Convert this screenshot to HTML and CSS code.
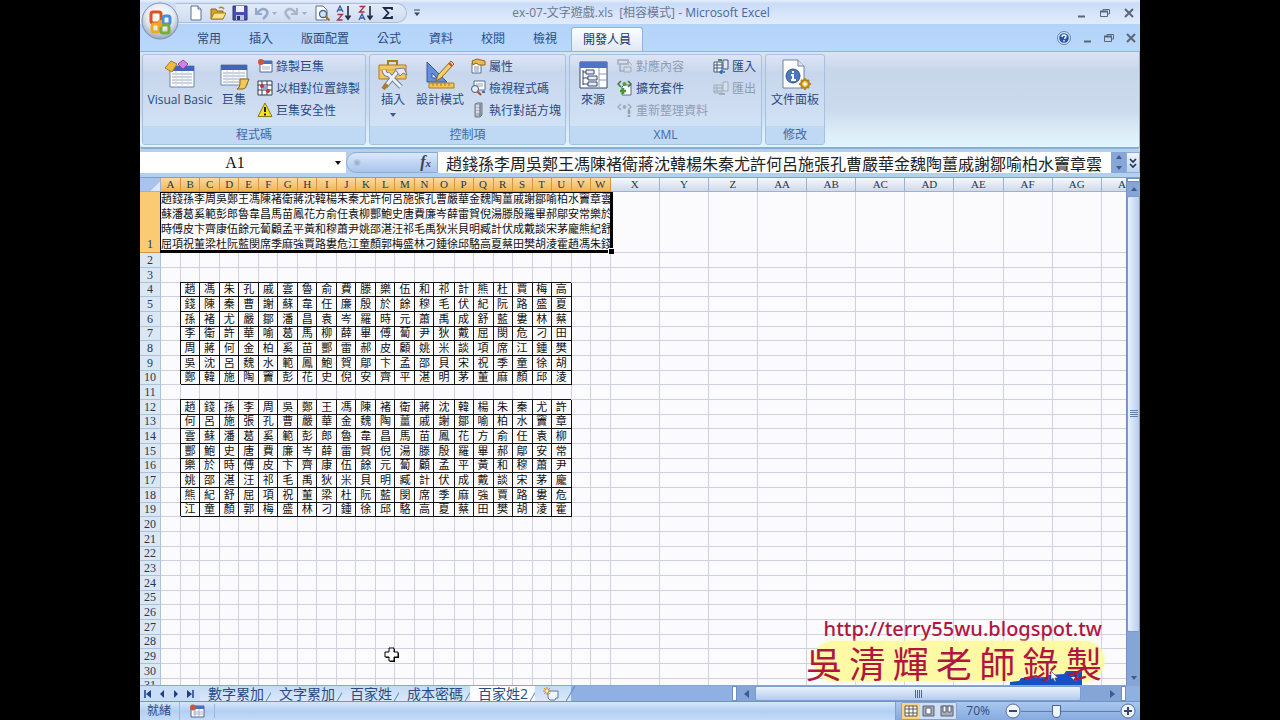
FILE: index.html
```html
<!DOCTYPE html>
<html lang="zh-Hant">
<head>
    <meta charset="UTF-8">
    <meta name="viewport" content="width=device-width, initial-scale=1.0">
    <title>ex-07-文字遊戲.xls - Microsoft Excel</title>
    <link rel="stylesheet" href="styles.css">
</head>
<body>
    <div class="app">
        <!-- Title bar -->
        <header class="title-bar">
            <div class="quick-access">
                <button aria-label="新增"><svg width="16" height="16" viewBox="0 0 16 16"><path d="M3 1h7l3 3v11H3z" fill="#fff" stroke="#5b6f93"/><path d="M10 1v3h3" fill="#dbe5f4" stroke="#5b6f93"/></svg></button>
                <button aria-label="開啟"><svg width="16" height="16" viewBox="0 0 16 16"><path d="M1 14V4h5l1 2h6v8z" fill="#d9a128" stroke="#8d6a16"/><path d="M1 14l3-6h12l-3 6z" fill="#ffe28a" stroke="#a37a1b"/><path d="M9 3q3-2 5 1" fill="none" stroke="#b88618" stroke-width="1.5"/></svg></button>
                <button aria-label="儲存"><svg width="16" height="16" viewBox="0 0 16 16"><path d="M1 1h14v14H1z" fill="#4a4fb5" stroke="#2b2f85"/><path d="M4 1h8v6H4z" fill="#eef2fb"/><path d="M4 10h8v5H4z" fill="#b9c4e4"/><path d="M5 11h3v4H5z" fill="#2b2f85"/></svg></button>
                <button aria-label="復原"><svg width="24" height="16" viewBox="0 0 24 16"><path d="M2 3v6h6" fill="none" stroke="#94a8cf" stroke-width="2"/><path d="M3 8q5-6 9-3t-3 9" fill="none" stroke="#94a8cf" stroke-width="2.5"/><path d="M18 7h5l-2.500 3z" fill="#a0aecb"/></svg></button>
                <button aria-label="取消復原"><svg width="24" height="16" viewBox="0 0 24 16"><path d="M13 3v6H7" fill="none" stroke="#a9b5cc" stroke-width="2"/><path d="M12 8Q7 2 3 5t3 9" fill="none" stroke="#a9b5cc" stroke-width="2.500"/><path d="M18 7h5l-2.500 3z" fill="#a0aecb"/></svg></button>
                <button aria-label="預覽列印"><svg width="16" height="16" viewBox="0 0 16 16"><path d="M2 1h7l4 4v10H2z" fill="#fff" stroke="#5b6f93"/><circle cx="9" cy="9" r="3.500" fill="#cfe4f7" stroke="#4c6182" stroke-width="1.300"/><path d="M11.500 11.500l4 4" stroke="#a3701f" stroke-width="2"/></svg></button>
                <button aria-label="遞增排序"><svg width="16" height="16" viewBox="0 0 16 16"><path d="M1 7l3-6 3 6M2 5h4" fill="none" stroke="#3d58a8" stroke-width="1.300"/><path d="M1.500 9.500h5l-5 5.500h5" fill="none" stroke="#a3324a" stroke-width="1.300"/><path d="M12 1v12M9.500 10.500l2.500 3.500 2.500-3.500" fill="none" stroke="#222c44" stroke-width="1.600"/></svg></button>
                <button aria-label="遞減排序"><svg width="16" height="16" viewBox="0 0 16 16"><path d="M1.500 1.500h5l-5 5.500h5" fill="none" stroke="#a3324a" stroke-width="1.300"/><path d="M1 15l3-6 3 6M2 13h4" fill="none" stroke="#3d58a8" stroke-width="1.300"/><path d="M12 1v12M9.500 10.500l2.500 3.500 2.500-3.500" fill="none" stroke="#222c44" stroke-width="1.600"/></svg></button>
                <button aria-label="加總"><svg width="16" height="16" viewBox="0 0 16 16"><path d="M12 5V3H4l4.500 5L4 13h8v-2" fill="none" stroke="#1d2a45" stroke-width="1.800"/></svg></button>
            </div>
            <button class="qat-more" aria-label="自訂快速存取工具列"><svg width="8" height="8" viewBox="0 0 8 8"><path d="M1 1h6" stroke="#33476b"/><path d="M1 3.500h6L4 7z" fill="#33476b"/></svg></button>
            <h1>ex-07-文字遊戲.xls&nbsp; [相容模式] - <span>Microsoft Excel</span></h1>
            <div class="window-buttons">
                <button aria-label="最小化"><svg width="12" height="12" viewBox="0 0 12 12"><path d="M3 9.500h7" stroke="#5b6677" stroke-width="2"/></svg></button>
                <button aria-label="還原"><svg width="12" height="12" viewBox="0 0 12 12"><path d="M4 4V2.500h6.500V7H9" fill="none" stroke="#5b6677"/><path d="M1.500 4.500h7v5h-7z" fill="none" stroke="#5b6677"/><path d="M1 4.500h8" stroke="#5b6677" stroke-width="2"/></svg></button>
                <button aria-label="關閉"><svg width="12" height="12" viewBox="0 0 12 12"><path d="M2 2l8 8M10 2l-8 8" stroke="#5b6677" stroke-width="2"/></svg></button>
            </div>
        </header>
        <button class="office-button" aria-label="Office 按鈕"><svg width="38" height="38" viewBox="0 0 38 38">
            <defs><radialGradient id="orb" cx="50%" cy="35%" r="65%"><stop offset="0" stop-color="#fff"/><stop offset="0.600" stop-color="#e3e9f1"/><stop offset="1" stop-color="#98a6bd"/></radialGradient></defs>
            <circle cx="19" cy="19" r="18" fill="url(#orb)" stroke="#7f91b0"/>
            <g fill="none" stroke-width="3"><rect x="10" y="10" width="10" height="11" rx="2" stroke="#e0521d"/><rect x="22" y="14" width="7" height="8" rx="2" stroke="#4a8fd6"/><rect x="11" y="22" width="7" height="8" rx="2" stroke="#f0ab1c"/><rect x="20" y="23" width="8" height="8" rx="2" stroke="#77ae3b"/></g>
            <path d="M17 18h4v7h-4z" fill="#f4a02d"/></svg></button>

        <!-- Ribbon tabs -->
        <nav class="tabs">
            <button>常用</button>
            <button>插入</button>
            <button>版面配置</button>
            <button>公式</button>
            <button>資料</button>
            <button>校閱</button>
            <button>檢視</button>
            <button class="active">開發人員</button>
            <div class="window-buttons inner">
                <button aria-label="說明"><svg width="14" height="14" viewBox="0 0 14 14"><circle cx="7" cy="7" r="6.500" fill="#d5e6fa" stroke="#5f83ba"/><circle cx="7" cy="7" r="4.800" fill="#2753a8"/><path d="M5 6q0-2 2-2t2 1.500Q9 7 7 7.500M7 9v1.500" fill="none" stroke="#fff" stroke-width="1.400"/></svg></button>
                <button aria-label="最小化"><svg width="12" height="12" viewBox="0 0 12 12"><path d="M3 9.500h7" stroke="#5b6677" stroke-width="2"/></svg></button>
                <button aria-label="還原"><svg width="12" height="12" viewBox="0 0 12 12"><path d="M4 4V2.500h6.500V7H9" fill="none" stroke="#5b6677"/><path d="M1.500 4.500h7v5h-7z" fill="none" stroke="#5b6677"/><path d="M1 4.500h8" stroke="#5b6677" stroke-width="2"/></svg></button>
                <button aria-label="關閉"><svg width="12" height="12" viewBox="0 0 12 12"><path d="M2 2l8 8M10 2l-8 8" stroke="#5b6677" stroke-width="2"/></svg></button>
            </div>
        </nav>

        <!-- Ribbon -->
        <div class="ribbon">
            <section class="group group-code">
                <div class="group-body">
                    <button class="big"><svg width="32" height="32" viewBox="0 0 32 32"><path d="M6 7h24v21H6z" fill="#fff" stroke="#6f83aa"/><path d="M6 7h24v5H6z" fill="#3f66b8"/><path d="M8 15h20M8 18h20M8 21h20M8 24h20" stroke="#98a7c4"/><path d="M12 12v16M18 12v16M24 12v16" stroke="#cdd6e6"/><path d="M1 9l6-7 6 3-5 8z" fill="#f1bb3e" stroke="#a97a1b"/><path d="M14 5l5-4 5 4-5 5z" fill="#d77fdc" stroke="#9a4ba5"/></svg>Visual Basic</button>
                    <button class="big"><svg width="32" height="32" viewBox="0 0 32 32"><path d="M3 6h26v20H3z" fill="#fff" stroke="#6f83aa"/><path d="M3 6h26v5H3z" fill="#3f66b8"/><path d="M5 14h22M5 17h22M5 20h22M5 23h22" stroke="#98a7c4"/><path d="M9 11v15M15 11v15M21 11v15" stroke="#cdd6e6"/><path d="M22 20h9l-2 5q-1 5-4 5h-6q3-1 3-5z" fill="#f0c75c" stroke="#8c6516"/></svg>巨集</button>
                    <div class="small-list">
                        <button><svg width="16" height="16" viewBox="0 0 16 16"><path d="M3 3h12v11H3z" fill="#fff" stroke="#51658f"/><path d="M3 3h12v3H3z" fill="#4a70bd"/><path d="M5 9h8M5 11h8" stroke="#a7b4cc"/><circle cx="4" cy="4" r="3" fill="#d2523a"/></svg>錄製巨集</button>
                        <button><svg width="16" height="16" viewBox="0 0 16 16"><path d="M1 1h14v14H1z" fill="#fff" stroke="#333a52"/><path d="M1 5h14M1 10h14M5 1v14M10 1v14" stroke="#333a52"/><path d="M5 5h5v5H5z" fill="#8fa6d6"/><circle cx="5" cy="6" r="2" fill="#c63030"/><circle cx="11" cy="11" r="2" fill="#c63030"/></svg>以相對位置錄製</button>
                        <button><svg width="16" height="16" viewBox="0 0 16 16"><path d="M8 1l7 13.500H1z" fill="#f7e21c" stroke="#8b7b12"/><path d="M8 5v5M8 11.500v2" stroke="#1e1e1e" stroke-width="2"/></svg>巨集安全性</button>
                    </div>
                </div>
                <h2>程式碼</h2>
            </section>
            <section class="group group-controls">
                <div class="group-body">
                    <button class="big"><svg width="32" height="32" viewBox="0 0 32 32"><path d="M11 6V2h9v4" fill="none" stroke="#a77b25" stroke-width="2"/><path d="M2 6h27v14H2z" fill="#f3c65f" stroke="#a77b25"/><path d="M2 11h27" stroke="#d39f35"/><path d="M8 28l12-15M7 11q1 6 6 4M11 15l13 13" stroke="#6f7f98" stroke-width="5" fill="none"/><path d="M8 28l12-15M7 11q1 6 6 4M11 15l13 13" stroke="#eef2f8" stroke-width="3" fill="none"/><path d="M18 10l9-1 3 7-4-2-3 3z" fill="#e4eaf3" stroke="#6f7f98"/><path d="M6 30l4-5" stroke="#ad7b26" stroke-width="4"/></svg>插入<i class="caret"></i></button>
                    <button class="big"><svg width="32" height="32" viewBox="0 0 32 32"><path d="M3 3v20h20z" fill="#648fd8" stroke="#37599f"/><path d="M8 14v5h5z" fill="#dce8f9" stroke="#37599f"/><path d="M5 24h25v5H5z" fill="#f4c556" stroke="#a77b25"/><path d="M9 24v3M13 24v3M17 24v3M21 24v3M25 24v3" stroke="#a77b25"/><path d="M12 22l2-6L27 2l3 3-13 14z" fill="#f5cf67" stroke="#866727"/><path d="M25 4l3 3" stroke="#c6483e" stroke-width="2"/></svg>設計模式</button>
                    <div class="small-list">
                        <button><svg width="16" height="16" viewBox="0 0 16 16"><path d="M2 5h9v10H2z" fill="#fff" stroke="#596d93"/><path d="M4 9h5M4 11h5M4 13h5" stroke="#7f91b0"/><path d="M2 3l5-2 8 2v4H9L6 5 3 7z" fill="#e9bb50" stroke="#8a671d"/></svg>屬性</button>
                        <button><svg width="16" height="16" viewBox="0 0 16 16"><path d="M4 1h11v9H4z" fill="#fff" stroke="#596d93"/><path d="M6 4h7M6 6h7" stroke="#90a0bb"/><circle cx="5" cy="9" r="3.500" fill="#e2eefa" stroke="#4b5670"/><path d="M7.500 11.500L11 15" stroke="#b14934" stroke-width="2"/><path d="M12 12h3" stroke="#596d93" stroke-width="2"/></svg>檢視程式碼</button>
                        <button><svg width="16" height="16" viewBox="0 0 16 16"><path d="M5 2l2-1h5v12l-2 2H5z" fill="#aeb6c4" stroke="#6e7789"/><path d="M6 4h4M6 7h4M6 10h4" stroke="#fff"/><path d="M10 2v12" stroke="#596276"/></svg>執行對話方塊</button>
                    </div>
                </div>
                <h2>控制項</h2>
            </section>
            <section class="group group-xml">
                <div class="group-body">
                    <button class="big"><svg width="32" height="32" viewBox="0 0 32 32"><path d="M3 3h27v26H3z" fill="#fff" stroke="#33456e"/><path d="M3 3h27v6H3z" fill="#4c75c7"/><path d="M22 9v20M22 15h8M22 21h8" stroke="#8998b5"/><path d="M6 11v15M6 13h5M6 19h6M6 25h6" stroke="#33456e"/><path d="M9 11h8v4H9zM11 17h9v4h-9zM11 23h9v4h-9z" fill="#e8eef8" stroke="#33456e"/></svg>來源</button>
                    <div class="small-list">
                        <button disabled><svg width="16" height="16" viewBox="0 0 16 16"><path d="M1 2h10v4H1zM3 6v7h4" fill="none" stroke="#a3acba" stroke-width="1.500"/><path d="M7 9h7v5H7zM10 2l5 5" fill="#d4dae4" stroke="#a3acba"/></svg>對應內容</button>
                        <button><svg width="16" height="16" viewBox="0 0 16 16"><path d="M7 5h7v10H5V7z" fill="#fff" stroke="#596d93"/><path d="M4 1L1 4l3 3M11 1l3 3-3 3" fill="none" stroke="#3f7a36" stroke-width="1.500"/><circle cx="7.500" cy="4" r="2" fill="#5a9c45"/><path d="M6 8v6M3 11h6" stroke="#3e9a2e" stroke-width="2.500"/></svg>擴充套件</button>
                        <button disabled><svg width="16" height="16" viewBox="0 0 16 16"><path d="M4 2L1 5l3 3M11 2l3 3-3 3" fill="none" stroke="#a3acba" stroke-width="1.500"/><circle cx="7.500" cy="5" r="2" fill="#a3acba"/><path d="M12 8v4M12 13v2" stroke="#929cab" stroke-width="2.500"/></svg>重新整理資料</button>
                    </div>
                    <div class="small-list">
                        <button><svg width="16" height="16" viewBox="0 0 16 16"><path d="M1 4h8v10H1z" fill="#fff" stroke="#43557d"/><path d="M1 7h8M1 10h8M4 4v10" stroke="#43557d"/><path d="M10 2h5v9h-5z" fill="#dfe8f6" stroke="#43557d"/><path d="M12 14h-5M9 12l-2 2 2 2" fill="none" stroke="#2d6cb5" stroke-width="1.500"/><path d="M5 2h4" stroke="#3f9236" stroke-width="2"/></svg>匯入</button>
                        <button disabled><svg width="16" height="16" viewBox="0 0 16 16"><path d="M1 5h8v8H1zM1 8h8M1 11h8M4 5v8" fill="none" stroke="#a3acba"/><path d="M10 2h5v9h-5z" fill="#d9dfe8" stroke="#a3acba"/><path d="M6 14h6" stroke="#a3acba" stroke-width="2"/></svg>匯出</button>
                    </div>
                </div>
                <h2>XML</h2>
            </section>
            <section class="group group-modify">
                <div class="group-body">
                    <button class="big"><svg width="32" height="32" viewBox="0 0 32 32"><path d="M4 1h15l6 6v22H4z" fill="#fff" stroke="#7182a2"/><path d="M19 1v6h6" fill="#dde6f3" stroke="#7182a2"/><circle cx="14" cy="17" r="7" fill="#4a79c0" stroke="#315694"/><path d="M14 12v2M12 16h2v5M12 21h5" stroke="#fff" stroke-width="2" fill="none"/><circle cx="26" cy="25" r="4" fill="#f2cd58" stroke="#b28722" stroke-width="2"/><path d="M26 19v3M26 28v3M20 25h3M29 25h3M22 21l2 2M28 27l2 2M30 21l-2 2M24 27l-2 2" stroke="#b28722" stroke-width="2"/><circle cx="26" cy="25" r="1.500" fill="#fff"/></svg>文件面板</button>
                </div>
                <h2>修改</h2>
            </section>
        </div>

        <!-- Formula bar -->
        <div class="formula-bar">
            <input class="name-box" type="text" value="A1" aria-label="名稱方塊">
            <button class="name-drop" aria-label="名稱清單"><i class="caret"></i></button>
            <div class="fx-area"><span class="knob"></span><button class="fx" aria-label="插入函數">f<small>x</small></button></div>
            <input class="formula-input" type="text" aria-label="資料編輯列" value="趙錢孫李周吳鄭王馮陳褚衛蔣沈韓楊朱秦尤許何呂施張孔曹嚴華金魏陶薑戚謝鄒喻柏水竇章雲">
            <div class="spinner"><button aria-label="上一行"><i class="caret up"></i></button><button aria-label="下一行"><i class="caret"></i></button></div>
            <button class="expand" aria-label="展開資料編輯列"><svg width="10" height="12" viewBox="0 0 10 12"><path d="M2 2l3 3 3-3M2 7l3 3 3-3" fill="none" stroke="#1f2f52" stroke-width="1.600"/></svg></button>
        </div>

        <!-- Worksheet -->
        <main class="workspace">
            <div class="sheet">
                <table id="grid"></table>
                <svg class="cross-cursor" width="16" height="16" viewBox="0 0 16 16"><path d="M6 2h5v4h4v5h-4v4H6v-4H2V6h4z" fill="#000"/><path d="M5 1h5v4h4v5h-4v4H5v-4H1V5h4z" fill="#fff" stroke="#000"/></svg>
                <div class="watermark">
                    <a href="http://terry55wu.blogspot.tw">http://terry55wu.blogspot.tw</a>
                    <p><svg class="stroke-mark" width="72" height="14" viewBox="0 0 72 14"><path d="M0 11l9-1 2-3 25-1 2-2 16-1 2-3h16v14H0z" fill="#1550c4"/><path d="M61 6h7l-3 4z" fill="#fff"/></svg><span>吳</span><span>清</span><span>輝</span><span>老</span><span>師</span><span>錄</span><span>製</span><svg class="arrow-cursor" width="8" height="12" viewBox="0 0 8 12"><path d="M1 0v9l2-2 2 4 1-1-1-3h3z" fill="#fff" stroke="#333" stroke-width="0.500"/></svg></p>
                </div>
            </div>
            <div class="v-scroll">
                <span class="split"></span>
                <button aria-label="向上捲動"><i class="caret up"></i></button>
                <span class="thumb"><i class="grip"></i></span>
                <span class="track"></span>
                <button aria-label="向下捲動"><i class="caret"></i></button>
            </div>
        </main>

        <!-- Sheet tabs -->
        <div class="sheet-bar">
            <div class="sheet-nav">
                <button aria-label="第一張"><svg width="10" height="10" viewBox="0 0 10 10"><path d="M2 1v8" stroke="#1d3f86" stroke-width="1.500"/><path d="M8 1v8L3 5z" fill="#1d3f86"/></svg></button>
                <button aria-label="上一張"><svg width="10" height="10" viewBox="0 0 10 10"><path d="M7 1v8L3 5z" fill="#1d3f86"/></svg></button>
                <button aria-label="下一張"><svg width="10" height="10" viewBox="0 0 10 10"><path d="M3 1v8l4-4z" fill="#1d3f86"/></svg></button>
                <button aria-label="最後一張"><svg width="10" height="10" viewBox="0 0 10 10"><path d="M8 1v8" stroke="#1d3f86" stroke-width="1.500"/><path d="M2 1v8l5-4z" fill="#1d3f86"/></svg></button>
            </div>
            <div class="sheet-tabs">
                <button>數字累加</button>
                <button>文字累加</button>
                <button>百家姓</button>
                <button>成本密碼</button>
                <button class="active">百家姓2</button>
                <button class="new-tab" aria-label="插入工作表"><svg width="18" height="14" viewBox="0 0 18 14"><path d="M5 4h10v7h-2l-1 2H7L5 11z" fill="#eef4fc" stroke="#6078a4"/><path d="M4 0v8M0 4h8M1 1l6 6M7 1L1 7" stroke="#c98a1d"/><circle cx="4" cy="4" r="1.500" fill="#fff3b8"/></svg></button>
            </div>
            <div class="h-scroll">
                <span class="split"></span>
                <button aria-label="向左捲動"><i class="caret left"></i></button>
                <span class="thumb"><i class="grip"></i></span>
                <span class="track"></span>
                <button aria-label="向右捲動"><i class="caret right"></i></button>
                <span class="split"></span>
            </div>
        </div>

        <!-- Status bar -->
        <footer class="status-bar">
            <span class="ready">就緒</span>
            <button class="record" aria-label="錄製巨集"><svg width="16" height="14" viewBox="0 0 16 14"><path d="M2 2h13v11H2z" fill="#fff" stroke="#51658f"/><path d="M2 2h13v3H2z" fill="#4a70bd"/><path d="M4 8h10M4 10h10M6 5v8M10 5v8" stroke="#a7b4cc"/><circle cx="4" cy="3.500" r="3" fill="#d2523a"/></svg></button>
            <div class="status-right">
                <div class="views">
                    <button class="active" aria-label="標準模式"><svg width="14" height="12" viewBox="0 0 14 12"><path d="M1 1h12v10H1zM1 4h12M1 8h12M5 1v10M9 1v10" fill="#fff" stroke="#5c5a53"/></svg></button>
                    <button aria-label="整頁模式"><svg width="14" height="12" viewBox="0 0 14 12"><path d="M1 1h11v10H1z" fill="#a5adbb" stroke="#566079"/><path d="M4 3h5v6H4z" fill="#fff" stroke="#566079"/></svg></button>
                    <button aria-label="分頁預覽"><svg width="14" height="12" viewBox="0 0 14 12"><path d="M1 1h12v10H1z" fill="#a5adbb" stroke="#566079"/><path d="M3 1h3v6H3zM8 1h3v6H8z" fill="#fff" stroke="#566079"/></svg></button>
                </div>
                <label for="zoom">70%</label>
                <button class="round" aria-label="縮小"><svg width="16" height="16" viewBox="0 0 16 16"><circle cx="8" cy="8" r="7" fill="#eef4fc" stroke="#566c96"/><path d="M4 8h8" stroke="#33476f" stroke-width="2"/></svg></button>
                <input id="zoom" type="range" min="0" max="100" value="34">
                <button class="round" aria-label="放大"><svg width="16" height="16" viewBox="0 0 16 16"><circle cx="8" cy="8" r="7" fill="#eef4fc" stroke="#566c96"/><path d="M4 8h8M8 4v8" stroke="#33476f" stroke-width="2"/></svg></button>
            </div>
        </footer>
    </div>

    <script src="script.js"></script>
</body>
</html>
```
FILE: styles.css
```css
* {
    box-sizing: border-box;
}

body {
    margin: 0;
    padding: 0 140px;
    background: #000;
    color: #2b4a84;
    font-family: "Open Sans", "Noto Sans CJK TC", sans-serif;
    font-size: 12px;
}

button {
    margin: 0;
    padding: 0;
    border: 0;
    background: none;
    color: inherit;
    font: inherit;
    white-space: nowrap;
}

input {
    margin: 0;
    border: 0;
    border-radius: 0;
    min-width: 0;
}

svg {
    display: block;
    flex: none;
}

.app {
    position: relative;
    display: flex;
    flex-direction: column;
    height: 100vh;
    overflow: hidden;
    background: #bcd7f5;
}

.caret {
    display: block;
    width: 0;
    border: 3px solid transparent;
    border-top: 4px solid #44598a;
    border-bottom: 0;
}

.caret.up {
    border-top: 0;
    border-bottom: 4px solid #44598a;
}

.caret.left {
    border: 4px solid transparent;
    border-right: 5px solid #3c5a94;
    border-left: 0;
}

.caret.right {
    border: 4px solid transparent;
    border-left: 5px solid #3c5a94;
    border-right: 0;
}

/* Title bar */
.title-bar {
    display: flex;
    align-items: center;
    flex: none;
    height: 24px;
    padding: 2px 5px 0 36px;
    background: linear-gradient(#e8effb, #c9dcf8 15%, #d6e3f9 50%, #e1ebfb);
}

.quick-access {
    display: flex;
    align-items: center;
    gap: 6px;
    height: 20px;
    padding: 0 10px 0 12px;
    border: 1px solid #a8bfe0;
    border-left: 0;
    border-radius: 0 10px 10px 0;
    background: linear-gradient(#e3ebf8, #cfdcf0);
}

.qat-more {
    padding: 4px 6px;
}

.title-bar h1 {
    flex: 1;
    margin: 0;
    padding-right: 220px;
    text-align: center;
    color: #6c7890;
    font-size: 12px;
    font-weight: 400;
    line-height: 20px;
}

.title-bar h1 span {
    color: #47669f;
}

.window-buttons {
    display: flex;
    align-items: center;
    gap: 12px;
}

.window-buttons.inner {
    margin-left: auto;
    gap: 10px;
}

.office-button {
    position: absolute;
    left: 1px;
    top: 2px;
    z-index: 1;
}

/* Ribbon tabs */
.tabs {
    display: flex;
    align-items: flex-end;
    flex: none;
    height: 27px;
    padding: 0 3px 0 43px;
    background: linear-gradient(#b3d3fa, #b9d8fa);
}

.tabs > button {
    height: 24px;
    padding: 0 14px;
    line-height: 22px;
}

.tabs > .active {
    border: 1px solid #8fb2de;
    border-bottom: 0;
    border-radius: 3px 3px 0 0;
    padding: 0 11px;
    background: linear-gradient(#fdfeff, #dfe8f6);
    color: #17336a;
}

.tabs .window-buttons {
    height: 26px;
}

/* Ribbon */
.ribbon {
    display: flex;
    gap: 3px;
    flex: none;
    height: 98px;
    padding: 2px;
    border: 1px solid #8db2e3;
    border-width: 1px 1px 2px 0;
    border-bottom-color: #8aaed0;
    border-radius: 0 0 3px 3px;
    background: linear-gradient(#dbe3f4, #c8d6ea 20%, #cbdaec 60%, #dcedf8 85%, #e0f5fd);
}

.group {
    display: flex;
    flex-direction: column;
    border: 1px solid #a6c1de;
    border-radius: 3px;
    background: linear-gradient(#dde5f5, #c7d6ec 20%, #d2e2f5 80%);
}

.group-code {
    width: 224px;
}

.group-controls {
    width: 197px;
}

.group-xml {
    width: 193px;
}

.group-modify {
    width: 60px;
}

.group-body {
    display: flex;
    flex: 1;
    padding: 0 0 0 4px;
}

.group h2 {
    margin: 0;
    height: 18px;
    border-radius: 0 0 3px 3px;
    background: #bfd8f3;
    color: #4468a5;
    font-size: 12px;
    font-weight: 400;
    line-height: 18px;
    text-align: center;
}

.big {
    display: flex;
    flex-direction: column;
    align-items: center;
    flex: none;
    padding-top: 4px;
    line-height: 18px;
}

.big .caret {
    margin-top: 4px;
}

.group-code .big:nth-child(1) {
    width: 66px;
}

.group-code .big:nth-child(2) {
    width: 42px;
}

.group-controls .big:nth-child(1) {
    width: 38px;
}

.group-controls .big:nth-child(2) {
    width: 56px;
}

.group-xml .big {
    width: 38px;
}

.group-modify .group-body {
    justify-content: center;
    padding-left: 0;
}

.small-list {
    display: flex;
    flex-direction: column;
    padding-left: 2px;
}

.group-xml .small-list {
    width: 96px;
    padding-left: 5px;
}

.small-list button {
    display: flex;
    align-items: center;
    gap: 3px;
    height: 22px;
}

.small-list button:disabled {
    color: #8f9cb3;
}

/* Formula bar */
.formula-bar {
    display: flex;
    flex: none;
    height: 29px;
    padding: 3px 0 4px;
    border-bottom: 1px solid #7f9fc6;
    background: #b3d0ee;
}

.name-box {
    width: 190px;
    background: #fff;
    color: #111;
    font-family: "Liberation Serif", serif;
    font-size: 16px;
    text-align: center;
}

.name-drop {
    display: flex;
    align-items: center;
    justify-content: center;
    width: 16px;
    background: #fff;
}

.name-drop .caret {
    border-top-color: #111;
}

.fx-area {
    display: flex;
    align-items: center;
    justify-content: space-between;
    width: 92px;
    padding: 0 6px;
    border: 1px solid #8facd4;
    border-radius: 11px 0 0 11px;
    background: linear-gradient(#dbe8fa, #a9c4ec);
}

.knob {
    width: 8px;
    height: 8px;
    border-radius: 50%;
    background: radial-gradient(#8fa5ca, #d7e3f4);
}

.fx {
    color: #3a4258;
    font-family: "Liberation Serif", serif;
    font-size: 16px;
    font-style: italic;
    font-weight: 700;
    line-height: 18px;
}

.fx small {
    font-size: 11px;
}

.formula-input {
    flex: 1;
    padding: 0 0 0 8px;
    background: #fff;
    color: #222;
    font-family: "Liberation Serif", "Noto Sans CJK TC", serif;
    font-size: 16px;
}

.spinner {
    display: flex;
    flex-direction: column;
    width: 15px;
    background: #86a7d8;
}

.spinner button {
    display: flex;
    align-items: center;
    justify-content: center;
    flex: 1;
}

.expand {
    display: flex;
    align-items: center;
    justify-content: center;
    width: 14px;
    border: 1px solid #8facd4;
    background: linear-gradient(#f0f6fe, #bcd2f0);
}

/* Worksheet */
.workspace {
    display: flex;
    flex: 1;
    min-height: 0;
}

.sheet {
    position: relative;
    flex: 1;
    min-width: 0;
    overflow: hidden;
    background: #fbfbfd;
}

#grid {
    width: 1011px;
    table-layout: fixed;
    border-spacing: 0;
    color: #111;
    font-family: "Liberation Serif", "Noto Sans CJK TC", serif;
    font-size: 11px;
}

#grid .row-col {
    width: 21px;
}

#grid .letter-col {
    width: 19px;
}

#grid .letter-col:nth-child(even) {
    width: 20px;
}

#grid .wide-col {
    width: 49px;
}

#grid th,
#grid td {
    height: 15px;
    padding: 0;
    border-right: 1px solid #cfd0e2;
    border-bottom: 1px solid #cfd0e2;
    line-height: 14px;
    text-align: center;
    white-space: nowrap;
}

#grid tbody tr:nth-child(3n+1) > * {
    height: 14px;
    line-height: 13px;
}

#grid thead th {
    height: 14px;
    border-color: #9db2d0;
    background: linear-gradient(#f6f9fd, #d0d9ea);
    color: #27364f;
    font-size: 11px;
    font-weight: 400;
    line-height: 13px;
}

#grid thead .selected {
    border-color: #d8953c;
    background: linear-gradient(#fbdba0, #f0b552);
}

#grid thead .corner {
    background: linear-gradient(135deg, #a9c4ec 70%, #dce8f8 70%);
}

#grid tbody th {
    border-color: #a9c3de;
    background: #dbe8f4;
    color: #27364f;
    font-size: 12px;
    font-weight: 400;
}

#grid tbody .selected {
    border-color: #d8953c;
    background: #fbcb74;
    vertical-align: bottom;
}

#grid tbody tr:first-child > * {
    height: 60px;
    line-height: 15px;
}

#grid .active-cell {
    position: relative;
    text-align: left;
    vertical-align: top;
}

/* selection frame lies just outside the cell */
#grid .active-cell::before {
    content: "";
    position: absolute;
    inset: 0 -3px -1px -1px;
    border: 1px solid #000;
    border-width: 1px 3px 3px 1px;
}

#grid .active-cell::after {
    content: "";
    position: absolute;
    right: -4px;
    bottom: -2px;
    width: 5px;
    height: 5px;
    border: 1px solid #fff;
    border-width: 1px 0 0 1px;
    background: #000;
}

#grid .boxed {
    border-color: #111;
    box-shadow: -1px -1px 0 #111;
}

.cross-cursor {
    position: absolute;
    left: 244px;
    top: 469px;
}

.watermark {
    position: absolute;
    right: 24px;
    bottom: 0;
    width: 296px;
    color: #b0163f;
}

.watermark a {
    display: block;
    color: inherit;
    font-family: "Noto Sans", sans-serif;
    font-size: 20px;
    font-weight: 500;
    line-height: 20px;
    text-align: right;
    text-decoration: none;
}

.watermark p {
    position: relative;
    display: flex;
    justify-content: space-between;
    margin: 0;
    font-family: "Noto Sans CJK TC", sans-serif;
    font-size: 36px;
    font-weight: 400;
    line-height: 46px;
}

/* marker highlight behind the name */
.watermark p::before {
    content: "";
    position: absolute;
    inset: 2px -2px 4px 8px;
    border-radius: 20px;
    background: #fdf9a4;
    box-shadow: 0 0 4px #fdf9a4;
}

.watermark span {
    position: relative;
}

.stroke-mark {
    position: absolute;
    right: 20px;
    bottom: 0;
}

.arrow-cursor {
    position: absolute;
    right: 44px;
    bottom: 2px;
}

/* Scroll bars */
.v-scroll,
.h-scroll {
    display: flex;
    background: #84a5d6;
}

.v-scroll {
    flex-direction: column;
    width: 14px;
    border-left: 1px solid #6f8fbf;
}

.v-scroll button {
    display: flex;
    align-items: center;
    justify-content: center;
    height: 14px;
}

.v-scroll .split {
    height: 4px;
    border: 1px solid #6f8fbf;
    background: #fff;
}

.v-scroll .thumb {
    display: flex;
    align-items: center;
    justify-content: center;
    flex: 11;
    border: 1px solid #7c9ccb;
    border-radius: 2px;
    background: linear-gradient(90deg, #eaf2fd, #b8cdec);
}

.v-scroll .track {
    flex: 1;
}

.v-scroll .grip {
    width: 8px;
    height: 7px;
    background: repeating-linear-gradient(#6180b0 0 1px, transparent 1px 2px);
}

.sheet-bar {
    display: flex;
    flex: none;
    height: 16px;
    border-top: 1px solid #8aa6ce;
    background: #8fb0e0;
}

.sheet-nav {
    display: flex;
    align-items: center;
    gap: 4px;
    padding: 0 5px 0 3px;
    background: #c9ddf6;
}

.sheet-tabs {
    display: flex;
    flex: 1;
}

.sheet-tabs button {
    position: relative;
    padding: 0 7px 0 8px;
    background: linear-gradient(#c3daf6, #dbe9fa);
    font-size: 14px;
    line-height: 15px;
}

.sheet-tabs button::after {
    content: "";
    position: absolute;
    right: 0;
    top: 0;
    height: 15px;
    border-right: 1px solid #5f7fb0;
    transform: skewX(-30deg);
}

.sheet-tabs .active {
    background: #fbfcfe;
}

.sheet-tabs .new-tab {
    padding-right: 10px;
}

.h-scroll {
    width: 394px;
    margin-right: 14px;
}

.h-scroll button {
    display: flex;
    align-items: center;
    justify-content: center;
    width: 18px;
}

.h-scroll .split {
    width: 5px;
    border: 1px solid #6f8fbf;
    background: #fff;
}

.h-scroll .thumb {
    display: flex;
    align-items: center;
    justify-content: center;
    flex: 15;
    border: 1px solid #7c9ccb;
    border-radius: 2px;
    background: linear-gradient(#eaf2fd, #b4cbed);
}

.h-scroll .track {
    flex: 1;
}

.h-scroll .grip {
    width: 7px;
    height: 8px;
    background: repeating-linear-gradient(90deg, #4e6690 0 1px, transparent 1px 2px);
}

/* Status bar */
.status-bar {
    display: flex;
    align-items: center;
    flex: none;
    height: 19px;
    border-top: 1px solid #6f93c6;
    background: linear-gradient(#d6e6fa, #b2cff3 50%, #c5dcf8);
}

.ready {
    padding: 0 8px 0 7px;
    border-right: 1px solid #9ab7de;
    line-height: 18px;
}

.record {
    padding: 0 9px;
    border-right: 1px solid #9ab7de;
}

.status-right {
    display: flex;
    align-items: center;
    margin-left: auto;
    padding: 0 4px 0 5px;
    border-left: 1px solid #7e9fd0;
    background: linear-gradient(#a9c6ee, #86abdf);
}

.views {
    display: flex;
    border: 1px solid #87a3cb;
    border-radius: 2px;
}

.views button {
    padding: 2px;
    background: #cfdff4;
}

.views .active {
    background: #fbd387;
}

.status-right label {
    padding: 0 15px 0 9px;
    line-height: 18px;
}

#zoom {
    appearance: none;
    width: 99px;
    height: 16px;
    background: linear-gradient(#5c7db0, #5c7db0) center / 100% 1px no-repeat;
}

#zoom::-webkit-slider-thumb {
    appearance: none;
    width: 9px;
    height: 13px;
    border: 1px solid #4c638e;
    border-radius: 1px 1px 5px 5px;
    background: #eef4fc;
}
```
FILE: script.js
```js
// Surnames in reading order, 20 per line
const names =
    '趙錢孫李周吳鄭王馮陳褚衛蔣沈韓楊朱秦尤許' +
    '何呂施張孔曹嚴華金魏陶薑戚謝鄒喻柏水竇章' +
    '雲蘇潘葛奚範彭郎魯韋昌馬苗鳳花方俞任袁柳' +
    '酆鮑史唐費廉岑薛雷賀倪湯滕殷羅畢郝鄔安常' +
    '樂於時傅皮卞齊康伍餘元蔔顧孟平黃和穆蕭尹' +
    '姚邵湛汪祁毛禹狄米貝明臧計伏成戴談宋茅龐' +
    '熊紀舒屈項祝董梁杜阮藍閔席季麻強賈路婁危' +
    '江童顏郭梅盛林刁鍾徐邱駱高夏蔡田樊胡淩霍';

const letters = [...'ABCDEFGHIJKLMNOPQRSTUVWXYZ', 'AA', 'AB', 'AC', 'AD', 'AE', 'AF', 'AG', 'AH'];
const narrow = 23; // A to W

// Text of a cell, or null when it is empty
function cellText(row, col) {
    if (col < 1 || col > 20) return null;
    if (row >= 4 && row <= 10) return names[(col - 1) * 8 + row - 4];
    if (row >= 12 && row <= 19) return names[(row - 12) * 20 + col - 1];
    return null;
}

let html = '<colgroup><col class="row-col">';
letters.forEach((l, i) => {
    html += `<col class="${i < narrow ? 'letter-col' : 'wide-col'}">`;
});
html += '</colgroup><thead><tr><th class="corner"></th>';
letters.forEach((l, i) => {
    html += `<th${i < narrow ? ' class="selected"' : ''}>${l}</th>`;
});
html += '</tr></thead><tbody>';

// Row 1 holds the whole text, wrapped in lines of 41
const full = names + '趙馮朱錢';
const lines = [0, 41, 82, 123].map(n => full.slice(n, n + 41)).join('<br>');
html += `<tr><th class="selected">1</th><td class="active-cell" colspan="${narrow}">${lines}</td>`;
html += '<td></td>'.repeat(letters.length - narrow) + '</tr>';

for (let row = 2; row <= 31; row++) {
    html += `<tr><th>${row}</th>`;
    for (let col = 0; col < letters.length; col++) {
        const text = cellText(row, col);
        html += text ? `<td class="boxed">${text}</td>` : '<td></td>';
    }
    html += '</tr>';
}

document.getElementById('grid').innerHTML = html + '</tbody>';
```
